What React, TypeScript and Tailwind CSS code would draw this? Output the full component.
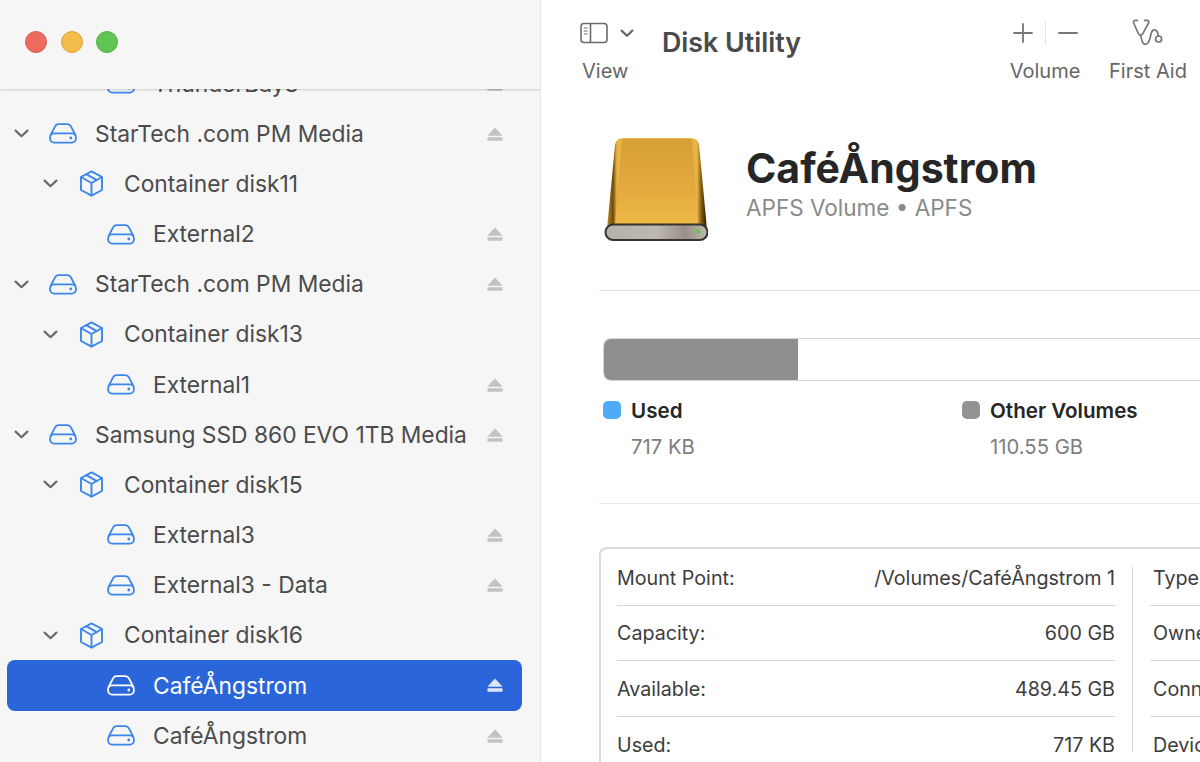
import React from "react";

const font = { fontFamily: "Inter, 'Noto Sans', sans-serif" };

function DriveIcon({ className }: { className: string }) {
  return (
    <svg viewBox="0 0 28 21" width="28" height="21" fill="none" stroke="currentColor" strokeWidth="1.8" strokeLinejoin="round" strokeLinecap="round" className={className}>
      <path d="M1.6 12 L6.2 3.2 Q7.2 1.2 9.6 1.2 H18.4 Q20.8 1.2 21.8 3.2 L26.4 12" />
      <rect x="1.1" y="10.4" width="25.8" height="9.2" rx="4" />
      <circle cx="21.8" cy="15" r="1.4" fill="currentColor" stroke="none" />
    </svg>
  );
}

function BoxIcon() {
  return (
    <svg viewBox="0 0 25 27" width="25" height="27" fill="none" stroke="currentColor" strokeWidth="1.9" strokeLinejoin="round" strokeLinecap="round" className="text-[#3b86ea]">
      <path d="M12.5 1.4 L23 7 V20 L12.5 25.6 L2 20 V7 Z" />
      <path d="M2.4 7.2 L12.5 13 L22.6 7.2 M12.5 13 V25.4 M7.2 4.2 L17.8 10.2" />
    </svg>
  );
}

function Chevron() {
  return (
    <svg viewBox="0 0 15 9" width="15" height="9" fill="none" stroke="#6a6a6a" strokeWidth="2.2" strokeLinecap="round" strokeLinejoin="round">
      <path d="M1.6 1.6 L7.5 7.2 L13.4 1.6" />
    </svg>
  );
}

function Eject({ selected }: { selected: boolean }) {
  return (
    <svg viewBox="0 0 16 14" width="16" height="14" fill={selected ? "#dce6f8" : "#c2c2c2"}>
      <path d="M8 0.4 L15.6 8.8 H0.4 Z" />
      <rect x="0.4" y="10.2" width="15.2" height="3.6" rx="0.8" />
    </svg>
  );
}

type Row = { depth: 0 | 1 | 2; label: string; selected?: boolean };

const rows: Row[] = [
  { depth: 2, label: "ThunderBay3" },
  { depth: 0, label: "StarTech .com PM Media" },
  { depth: 1, label: "Container disk11" },
  { depth: 2, label: "External2" },
  { depth: 0, label: "StarTech .com PM Media" },
  { depth: 1, label: "Container disk13" },
  { depth: 2, label: "External1" },
  { depth: 0, label: "Samsung SSD 860 EVO 1TB Media" },
  { depth: 1, label: "Container disk15" },
  { depth: 2, label: "External3" },
  { depth: 2, label: "External3 - Data" },
  { depth: 1, label: "Container disk16" },
  { depth: 2, label: "CaféÅngstrom", selected: true },
  { depth: 2, label: "CaféÅngstrom" },
];

function SidebarRow({ row }: { row: Row }) {
  const indent = row.depth === 0 ? "pl-[7px]" : row.depth === 1 ? "pl-[36px]" : "pl-[65px]";
  return (
    <div className={`ml-[7px] mr-[18px] flex h-[50.17px] items-center rounded-lg pr-[19px] ${indent} ${row.selected ? "bg-[#2a66d9] text-white" : "text-[#4b4b4b]"}`}>
      <div className="flex w-[35px] shrink-0 items-center">{row.depth < 2 && <Chevron />}</div>
      {row.depth === 1 ? (
        <div className="flex w-[46px] shrink-0 items-center pl-[1px]"><BoxIcon /></div>
      ) : (
        <div className="flex w-[46px] shrink-0 items-center">
          <DriveIcon className={row.selected ? "text-white" : "text-[#3b86ea]"} />
        </div>
      )}
      <span className="flex-1 whitespace-nowrap pt-[1px] text-[22.8px] leading-none">{row.label}</span>
      {row.depth !== 1 && <Eject selected={!!row.selected} />}
    </div>
  );
}

function Sidebar() {
  return (
    <aside className="flex h-full w-[541px] shrink-0 flex-col overflow-hidden border-r border-[#e6e6e6] bg-[#f6f6f6]">
      <div className="relative z-10 flex h-[89px] shrink-0 items-center gap-[13.5px] bg-[#f6f6f6] pb-[6px] pl-[25px] shadow-[0_1px_2px_rgba(0,0,0,0.18)]">
        <span className="h-[22px] w-[22px] rounded-full border border-[#dc5a50] bg-[#ec6a5e]" />
        <span className="h-[22px] w-[22px] rounded-full border border-[#dba63c] bg-[#f4bc4a]" />
        <span className="h-[22px] w-[22px] rounded-full border border-[#55ad48] bg-[#61c554]" />
      </div>
      <div className="-mt-[30.5px]">
        {rows.map((r, i) => (
          <SidebarRow key={i} row={r} />
        ))}
      </div>
    </aside>
  );
}

function Toolbar() {
  return (
    <header className="flex h-[89px] shrink-0 items-start pl-[39px] text-[#666]">
      <div className="flex w-[82px] flex-col pt-[21px]">
        <div className="flex h-[24px] items-center gap-[12px]">
          <svg viewBox="0 0 28 22" width="28" height="22" fill="none" stroke="#6b6b6b" strokeWidth="1.6">
            <rect x="1" y="1.5" width="26" height="19" rx="3" />
            <path d="M10.5 1.5 V20.5" />
            <path d="M3.8 6 H7.6 M3.8 9 H7.6 M3.8 12 H7.6" strokeWidth="1.2" />
          </svg>
          <svg viewBox="0 0 14 9" width="14" height="9" fill="none" stroke="#666" strokeWidth="2.2" strokeLinecap="round" strokeLinejoin="round">
            <path d="M1.6 1.6 L7 6.8 L12.4 1.6" />
          </svg>
        </div>
        <span className="mt-[16px] pl-[2px] text-[20px] leading-none">View</span>
      </div>
      <div className="flex-1 pt-[26px] text-[26.8px] font-semibold leading-[32px] text-[#4a4a4a]">Disk Utility</div>
      <div className="mr-[16px] flex w-[70px] flex-col items-center pt-[20px]">
        <div className="flex h-[26px] items-center text-[#777]">
          <svg viewBox="0 0 20 20" width="20" height="20" fill="none" stroke="currentColor" strokeWidth="1.8" strokeLinecap="round">
            <path d="M10 1 V19 M1 10 H19" />
          </svg>
          <span className="mx-[12px] h-[24px] w-px bg-[#e6e6e6]" />
          <svg viewBox="0 0 20 20" width="20" height="20" fill="none" stroke="currentColor" strokeWidth="1.8" strokeLinecap="round">
            <path d="M1 10 H19" />
          </svg>
        </div>
        <span className="mt-[15px] whitespace-nowrap text-[20px] leading-none">Volume</span>
      </div>
      <div className="mx-[13px] flex w-[78px] flex-col items-center pt-[19px]">
        <svg viewBox="0 0 32 28" width="32" height="28" fill="none" stroke="#777" strokeWidth="1.7" strokeLinecap="round" strokeLinejoin="round">
          <path d="M5.4 1.4 H3.4 Q1 1.4 1.6 4 L6.4 14.6 Q8.4 17.6 10.8 14.6 L16.6 4 Q17.4 1.4 15 1.4 H12.6" />
          <path d="M8.6 16.4 L10 22 Q12 27 15.4 24.4 Q17.6 22.4 19 15 Q20.2 10 23.4 11 Q25.8 12.2 26.4 17" />
          <circle cx="26.6" cy="20" r="3" />
        </svg>
        <span className="mt-[14px] whitespace-nowrap text-[20px] leading-none">First Aid</span>
      </div>
    </header>
  );
}

function DriveArt() {
  return (
    <svg viewBox="0 0 104 106" width="104" height="106" className="shrink-0">
      <defs>
        <linearGradient id="gold" x1="0" y1="0" x2="0" y2="1">
          <stop offset="0" stopColor="#d8a038" />
          <stop offset="0.55" stopColor="#e3a83e" />
          <stop offset="1" stopColor="#efb947" />
        </linearGradient>
        <linearGradient id="side" x1="0" y1="0" x2="1" y2="0">
          <stop offset="0" stopColor="#b98a2c" />
          <stop offset="0.06" stopColor="#6e4a0a" />
          <stop offset="0.1" stopColor="#e8b445" />
          <stop offset="0.9" stopColor="#e8b445" />
          <stop offset="0.94" stopColor="#8a6010" />
          <stop offset="0.985" stopColor="#3c2804" />
          <stop offset="1" stopColor="#7a5614" />
        </linearGradient>
        <linearGradient id="plate" x1="0" y1="0" x2="1" y2="0">
          <stop offset="0" stopColor="#b3b2a8" />
          <stop offset="0.5" stopColor="#bdb9b0" />
          <stop offset="0.78" stopColor="#9a8f88" />
          <stop offset="1" stopColor="#bcb9ae" />
        </linearGradient>
      </defs>
      <path d="M11 8 Q12 1 20 1 H86 Q94 1 95 8 L103 92 H3 Z" fill="url(#side)" />
      <path d="M18 2 H88 L94 88 H11 Z" fill="url(#gold)" />
      <rect x="1.5" y="87.5" width="102" height="15.5" rx="7.7" fill="url(#plate)" stroke="#33332f" strokeWidth="2" />
      <circle cx="94" cy="94.5" r="2.4" fill="#6fc24f" />
    </svg>
  );
}

function Legend({ color, title, value, width }: { color: string; title: string; value: string; width: string }) {
  return (
    <div className={`flex shrink-0 gap-[10px] ${width}`}>
      <span className={`h-[18px] w-[18px] shrink-0 rounded-[5px] ${color}`} />
      <div className="flex flex-col">
        <span className="whitespace-nowrap text-[20.6px] font-semibold leading-[20px] text-[#262626]">{title}</span>
        <span className="mt-[16px] whitespace-nowrap text-[20.3px] leading-[20px] text-[#7d7d7d]">{value}</span>
      </div>
    </div>
  );
}

function InfoRow({ label, value, last, inset }: { label: string; value: string; last?: boolean; inset?: boolean }) {
  return (
    <div className={`flex h-[55.5px] items-center justify-between whitespace-nowrap pt-[3px] text-[19.7px] leading-none text-[#3d3d3d] ${inset ? "pl-[3px]" : ""} ${last ? "" : "border-b border-[#d6d6d6]"}`}>
      <span>{label}</span>
      <span>{value}</span>
    </div>
  );
}

function Main() {
  return (
    <main className="flex h-full min-w-0 flex-1 flex-col overflow-hidden bg-white" style={font}>
      <Toolbar />
      <div className="flex flex-1 flex-col pl-[58px]">
        <section className="flex h-[202px] shrink-0 items-start border-b border-[#e2e2e2] pl-[5px] pt-[48px]">
          <DriveArt />
          <div className="ml-[38px] flex flex-col">
            <span className="mt-[6px] whitespace-nowrap text-[41px] font-bold leading-[50px] text-[#262626]">CaféÅngstrom</span>
            <span className="mt-[1px] whitespace-nowrap text-[22.5px] leading-[28px] text-[#8a8a8a]">APFS Volume • APFS</span>
          </div>
        </section>
        <section className="h-[213px] shrink-0 border-b border-[#e8e8e8] pl-[4px] pt-[47px]">
          <div className="h-[43px] overflow-hidden rounded-l-[8px] border-y border-l border-[#d6d6d6]">
            <div className="h-full w-[194px] bg-[#8f8f8f]" />
          </div>
          <div className="mt-[20px] flex">
            <Legend color="bg-[#4fabf6]" title="Used" value="717 KB" width="w-[359px]" />
            <Legend color="bg-[#939393]" title="Other Volumes" value="110.55 GB" width="w-[240px]" />
          </div>
        </section>
        <section className="mt-[43px] flex w-[640px] flex-1 rounded-tl-[8px] border-l-2 border-t-2 border-[#dadada] pl-[16px] pt-[1px]">
          <div className="w-[498px] shrink-0">
            <InfoRow label="Mount Point:" value="/Volumes/CaféÅngstrom 1" />
            <InfoRow label="Capacity:" value="600 GB" />
            <InfoRow label="Available:" value="489.45 GB" />
            <InfoRow label="Used:" value="717 KB" last />
          </div>
          <div className="ml-[17px] mt-[17px] h-[185px] w-px shrink-0 bg-[#d6d6d6]" />
          <div className="ml-[17px] flex-1">
            <InfoRow inset label="Type:" value="" />
            <InfoRow inset label="Owners:" value="" />
            <InfoRow inset label="Connection:" value="" />
            <InfoRow inset label="Device:" value="" last />
          </div>
        </section>
      </div>
    </main>
  );
}

export default function App() {
  return (
    <div className="flex h-[762px] w-[1200px] overflow-hidden" style={font}>
      <Sidebar />
      <Main />
    </div>
  );
}
